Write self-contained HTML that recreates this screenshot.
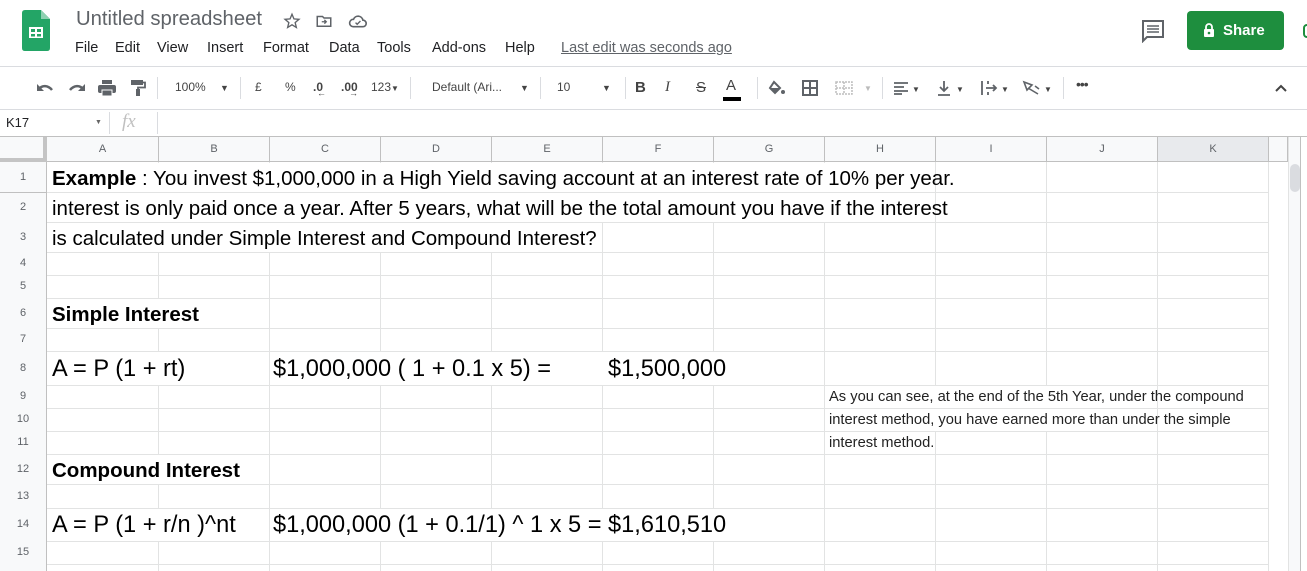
<!DOCTYPE html>
<html><head><meta charset="utf-8"><style>
*{margin:0;padding:0;box-sizing:border-box}
body{width:1307px;height:571px;overflow:hidden;background:#fff;font-family:"Liberation Sans",Arial,sans-serif;position:relative;color:#000}
.a{position:absolute}
.menu span{position:absolute;top:40px;font-size:14.5px;color:#202124}
.tb{position:absolute;top:80px;font-size:12px;color:#444}
.sep{position:absolute;top:77px;width:1px;height:22px;background:#dadce0}
.vl{position:absolute;top:162px;width:1px;height:409px;background:#e2e3e3}
.hl{position:absolute;left:47px;width:1221px;height:1px;background:#e2e3e3}
.rh{position:absolute;left:0;width:46px;text-align:center;font-size:11px;color:#5f6368}
.ch{position:absolute;top:137px;height:25px;line-height:25px;text-align:center;font-size:11px;color:#5f6368;border-right:1px solid #c0c0c0}
.t{position:absolute;background:#fff;white-space:nowrap;overflow:visible}
</style></head><body>
<svg class="a" style="left:22px;top:10px" width="28" height="41" viewBox="0 0 28 41"><path d="M3 0H19L28 9V38Q28 41 25 41H3Q0 41 0 38V3Q0 0 3 0Z" fill="#23a566"/><path d="M19 0V9H28Z" fill="#8ed1b1"/><rect x="7" y="17" width="14" height="11" fill="#fff"/><rect x="9" y="19" width="4" height="3" fill="#23a566"/><rect x="15" y="19" width="4" height="3" fill="#23a566"/><rect x="9" y="24" width="4" height="2.5" fill="#23a566"/><rect x="15" y="24" width="4" height="2.5" fill="#23a566"/></svg>
<div class="a" style="left:76px;top:8px;font-size:20.3px;color:#5f6368">Untitled spreadsheet</div>
<svg class="a" style="left:283px;top:12px" width="18" height="18" viewBox="0 0 24 24"><path d="M12 3l2.6 6.2 6.7.5-5.1 4.4 1.6 6.5L12 17.1 6.2 20.6l1.6-6.5L2.7 9.7l6.7-.5z" fill="none" stroke="#5f6368" stroke-width="1.8"/></svg>
<svg class="a" style="left:315px;top:12px" width="18" height="18" viewBox="0 0 24 24"><path d="M3 6h7l2 2h9v11H3z" fill="none" stroke="#5f6368" stroke-width="2"/><path d="M9 13h6M12.5 10.5l2.5 2.5-2.5 2.5" fill="none" stroke="#5f6368" stroke-width="1.8"/></svg>
<svg class="a" style="left:348px;top:12px" width="20" height="18" viewBox="0 0 24 22"><path d="M6 18h12a4 4 0 0 0 0-8 6 6 0 0 0-11.5-1A4.5 4.5 0 0 0 6 18z" fill="none" stroke="#5f6368" stroke-width="2"/><path d="M9 13l2 2 4-4" fill="none" stroke="#5f6368" stroke-width="1.6"/></svg>
<div class="menu"><span style="left:75px">File</span><span style="left:115px">Edit</span><span style="left:157px">View</span><span style="left:207px">Insert</span><span style="left:263px">Format</span><span style="left:329px">Data</span><span style="left:377px">Tools</span><span style="left:432px">Add-ons</span><span style="left:505px">Help</span><span style="left:561px;color:#5f6368;text-decoration:underline">Last edit was seconds ago</span></div>
<svg class="a" style="left:1141px;top:19px" width="24" height="24" viewBox="0 0 24 24"><path d="M2 2h20v16H6l-2 2-2 2z" fill="none" stroke="#5f6368" stroke-width="2"/><path d="M6 7h12M6 10h12M6 13h12" stroke="#5f6368" stroke-width="1.6"/></svg>
<div class="a" style="left:1187px;top:11px;width:97px;height:39px;background:#1e8e3e;border-radius:4px;color:#fff;font-weight:bold;font-size:15px;line-height:39px;padding-left:36px">Share</div>
<svg class="a" style="left:1203px;top:23px" width="12" height="14" viewBox="0 0 12 14"><path d="M3 6V4a3 3 0 0 1 6 0v2" fill="none" stroke="#fff" stroke-width="1.8"/><rect x="1" y="6" width="10" height="8" rx="1" fill="#fff"/><circle cx="6" cy="10" r="1.3" fill="#1e8e3e"/></svg>
<div class="a" style="left:1303px;top:24px;width:8px;height:14px;border:2px solid #1e8e3e;border-radius:7px"></div>
<div class="a" style="left:0;top:66px;width:1307px;height:1px;background:#dadce0"></div>
<svg class="a" style="left:35px;top:80px" width="20" height="16" viewBox="0 0 20 16"><path d="M4 9c3-4 9-4 13 1" fill="none" stroke="#5f6368" stroke-width="2.5"/><path d="M2 4v7h7z" fill="#5f6368"/></svg>
<svg class="a" style="left:67px;top:80px" width="20" height="16" viewBox="0 0 20 16"><path d="M16 9c-3-4-9-4-13 1" fill="none" stroke="#5f6368" stroke-width="2.5"/><path d="M18 4v7h-7z" fill="#5f6368"/></svg>
<svg class="a" style="left:97px;top:79px" width="20" height="18" viewBox="0 0 20 18"><rect x="5" y="1" width="10" height="4" fill="#5f6368"/><rect x="1" y="6" width="18" height="8" rx="2" fill="#5f6368"/><rect x="5" y="11" width="10" height="6" fill="#5f6368" stroke="#fff" stroke-width="1"/></svg>
<svg class="a" style="left:130px;top:79px" width="16" height="18" viewBox="0 0 16 18"><rect x="1" y="1" width="12" height="5" fill="#5f6368"/><path d="M13 3.5h2v5H8v3" fill="none" stroke="#5f6368" stroke-width="1.8"/><rect x="6" y="10" width="4" height="7" fill="#5f6368"/></svg>
<div class="sep" style="left:157px"></div>
<div class="tb" style="left:175px">100%</div><div class="tb" style="left:220px;font-size:9px;top:83px">▼</div>
<div class="sep" style="left:240px"></div>
<div class="tb" style="left:255px">£</div><div class="tb" style="left:285px">%</div>
<div class="tb" style="left:313px;font-weight:bold">.0<span style="position:absolute;left:4px;top:8px;font-size:9px">←</span></div>
<div class="tb" style="left:341px;font-weight:bold">.00<span style="position:absolute;left:8px;top:8px;font-size:9px">→</span></div>
<div class="tb" style="left:371px">123<span style="font-size:8px">▼</span></div>
<div class="sep" style="left:410px"></div>
<div class="tb" style="left:432px">Default (Ari...</div><div class="tb" style="left:520px;font-size:9px;top:83px">▼</div>
<div class="sep" style="left:540px"></div>
<div class="tb" style="left:557px">10</div><div class="tb" style="left:602px;font-size:9px;top:83px">▼</div>
<div class="sep" style="left:625px"></div>
<div class="tb" style="left:635px;font-size:15px;font-weight:bold;top:79px">B</div>
<div class="tb" style="left:665px;font-size:15px;font-style:italic;font-family:'Liberation Serif',serif;top:79px">I</div>
<div class="tb" style="left:696px;font-size:15px;top:79px;text-decoration:line-through">S</div>
<div class="tb" style="left:726px;font-size:15px;top:77px">A</div>
<div class="a" style="left:723px;top:97px;width:18px;height:4px;background:#000"></div>
<div class="sep" style="left:757px"></div>
<svg class="a" style="left:767px;top:80px" width="20" height="16" viewBox="0 0 20 16"><path d="M7 2l6 6-5 5-5-5z" fill="none" stroke="#5f6368" stroke-width="2"/><path d="M4 8h9l-5 5z" fill="#5f6368"/><circle cx="16" cy="12" r="2" fill="#5f6368"/></svg>
<svg class="a" style="left:802px;top:80px" width="16" height="16" viewBox="0 0 16 16"><path d="M1 1h14v14H1zM8 1v14M1 8h14" fill="none" stroke="#5f6368" stroke-width="2"/></svg>
<svg class="a" style="left:835px;top:81px" width="18" height="14" viewBox="0 0 18 14"><path d="M1 1h16v12H1z M9 1v12M1 7h16" fill="none" stroke="#bdbdbd" stroke-width="1.5" stroke-dasharray="2 1"/></svg>
<div class="tb" style="left:864px;font-size:8px;top:84px;color:#bbb">▼</div>
<div class="sep" style="left:882px"></div>
<svg class="a" style="left:893px;top:81px" width="16" height="14" viewBox="0 0 16 14"><path d="M1 2h14M1 6h10M1 10h14M1 13h8" stroke="#5f6368" stroke-width="1.8"/></svg><div class="tb" style="left:912px;font-size:8px;top:85px">▼</div>
<svg class="a" style="left:936px;top:80px" width="16" height="16" viewBox="0 0 16 16"><path d="M8 1v10M4 7l4 4 4-4M2 15h12" fill="none" stroke="#5f6368" stroke-width="1.8"/></svg><div class="tb" style="left:956px;font-size:8px;top:85px">▼</div>
<svg class="a" style="left:980px;top:80px" width="18" height="16" viewBox="0 0 18 16"><path d="M2 1v14M8 1v3M8 12v3M6 8h10M13 5l3 3-3 3" fill="none" stroke="#5f6368" stroke-width="1.8"/></svg><div class="tb" style="left:1001px;font-size:8px;top:85px">▼</div>
<svg class="a" style="left:1022px;top:80px" width="20" height="16" viewBox="0 0 20 16"><path d="M2 2l8 3-5 5zM6 8l10 6M13 6l4 3" fill="none" stroke="#5f6368" stroke-width="1.6"/></svg><div class="tb" style="left:1044px;font-size:8px;top:85px">▼</div>
<div class="sep" style="left:1063px"></div>
<div class="tb" style="left:1076px;font-size:14px;top:76px;letter-spacing:-1px">•••</div>
<svg class="a" style="left:1275px;top:84px" width="12" height="8" viewBox="0 0 12 8"><path d="M1 7l5-5 5 5" fill="none" stroke="#444" stroke-width="2"/></svg>
<div class="a" style="left:0;top:109px;width:1307px;height:1px;background:#dadce0"></div>
<div class="a" style="left:6px;top:115px;font-size:13px;color:#202124">K17</div>
<div class="a" style="left:95px;top:119px;font-size:7px;color:#666">▼</div>
<div class="a" style="left:109px;top:112px;width:1px;height:22px;background:#dadce0"></div>
<div class="a" style="left:122px;top:111px;font-size:19px;font-style:italic;font-family:'Liberation Serif',serif;color:#c0c0c0">fx</div>
<div class="a" style="left:157px;top:112px;width:1px;height:22px;background:#dadce0"></div>
<div class="a" style="left:0;top:136px;width:1307px;height:1px;background:#c0c0c0"></div>
<div class="a" style="left:0;top:137px;width:1301px;height:25px;background:#f8f9fa"></div>
<div class="a" style="left:0;top:137px;width:47px;height:25px;border-right:4px solid #c4c4c4;border-bottom:4px solid #c4c4c4"></div>
<div class="ch" style="left:47px;width:112px">A</div><div class="ch" style="left:159px;width:111px">B</div><div class="ch" style="left:270px;width:111px">C</div><div class="ch" style="left:381px;width:111px">D</div><div class="ch" style="left:492px;width:111px">E</div><div class="ch" style="left:603px;width:111px">F</div><div class="ch" style="left:714px;width:111px">G</div><div class="ch" style="left:825px;width:111px">H</div><div class="ch" style="left:936px;width:111px">I</div><div class="ch" style="left:1047px;width:111px">J</div><div class="ch" style="left:1158px;width:111px;background:#e8eaed">K</div><div class="ch" style="left:1269px;width:19px"></div>
<div class="a" style="left:47px;top:161px;width:1241px;height:1px;background:#c0c0c0"></div>
<div class="a" style="left:0;top:162px;width:47px;height:409px;background:#f8f9fa;border-right:1px solid #c0c0c0"></div>
<div class="a" style="left:1288px;top:137px;width:13px;height:434px;background:#f8f9fa;border-left:1px solid #e2e3e3;border-right:1px solid #c0c0c0"></div>
<div class="a" style="left:1290px;top:164px;width:10px;height:28px;background:#dadce0;border-radius:5px"></div>
<div class="vl" style="left:158px"></div><div class="vl" style="left:269px"></div><div class="vl" style="left:380px"></div><div class="vl" style="left:491px"></div><div class="vl" style="left:602px"></div><div class="vl" style="left:713px"></div><div class="vl" style="left:824px"></div><div class="vl" style="left:935px"></div><div class="vl" style="left:1046px"></div><div class="vl" style="left:1157px"></div><div class="vl" style="left:1268px"></div>
<div class="hl" style="top:192px"></div><div class="hl" style="top:222px"></div><div class="hl" style="top:252px"></div><div class="hl" style="top:275px"></div><div class="hl" style="top:298px"></div><div class="hl" style="top:328px"></div><div class="hl" style="top:351px"></div><div class="hl" style="top:385px"></div><div class="hl" style="top:408px"></div><div class="hl" style="top:431px"></div><div class="hl" style="top:454px"></div><div class="hl" style="top:484px"></div><div class="hl" style="top:508px"></div><div class="hl" style="top:541px"></div><div class="hl" style="top:564px"></div>
<div class="a" style="left:0;top:192px;width:47px;height:1px;background:#c0c0c0"></div>
<div class="rh" style="top:162px;line-height:30px">1</div><div class="rh" style="top:192px;line-height:30px">2</div><div class="rh" style="top:222px;line-height:30px">3</div><div class="rh" style="top:252px;line-height:23px">4</div><div class="rh" style="top:275px;line-height:23px">5</div><div class="rh" style="top:298px;line-height:30px">6</div><div class="rh" style="top:328px;line-height:23px">7</div><div class="rh" style="top:351px;line-height:34px">8</div><div class="rh" style="top:385px;line-height:23px">9</div><div class="rh" style="top:408px;line-height:23px">10</div><div class="rh" style="top:431px;line-height:23px">11</div><div class="rh" style="top:454px;line-height:30px">12</div><div class="rh" style="top:484px;line-height:24px">13</div><div class="rh" style="top:508px;line-height:33px">14</div><div class="rh" style="top:541px;line-height:23px">15</div>
<div class="t" style="left:48px;top:163px;width:887px;height:29px;line-height:31px;font-size:20.5px;padding-left:4px"><b>Example</b> : You invest $1,000,000 in a High Yield saving account at an interest rate of 10% per year.</div>
<div class="t" style="left:48px;top:193px;width:887px;height:29px;line-height:31px;font-size:20.5px;padding-left:4px">interest is only paid once a year. After 5 years, what will be the total amount you have if the interest</div>
<div class="t" style="left:48px;top:223px;width:554px;height:29px;line-height:31px;font-size:20.5px;padding-left:4px">is calculated under Simple Interest and Compound Interest?</div>
<div class="t" style="left:48px;top:299px;width:165px;height:29px;line-height:31px;font-size:20.5px;padding-left:4px;font-weight:bold">Simple Interest</div>
<div class="t" style="left:48px;top:352px;width:221px;height:33px;line-height:34px;font-size:23.6px;padding-left:4px">A = P (1 + rt)</div>
<div class="t" style="left:270px;top:352px;width:465px;height:33px;line-height:34px;font-size:23.6px;padding-left:3px">$1,000,000 ( 1 + 0.1 x 5) =<span style="position:absolute;left:338px">$1,500,000</span></div>
<div class="t" style="left:825px;top:386px;width:332px;height:22px;line-height:23px;font-size:14.7px;padding-left:4px;color:#222">As you can see, at the end of the 5th Year, under the compound</div>
<div class="t" style="left:825px;top:409px;width:332px;height:22px;line-height:23px;font-size:14.7px;padding-left:4px;color:#222">interest method, you have earned more than under the simple</div>
<div class="t" style="left:825px;top:432px;width:110px;height:22px;line-height:23px;font-size:14.7px;padding-left:4px;color:#222">interest method.</div>
<div class="t" style="left:48px;top:455px;width:200px;height:29px;line-height:31px;font-size:20.5px;padding-left:4px;font-weight:bold">Compound Interest</div>
<div class="t" style="left:48px;top:509px;width:221px;height:32px;line-height:33px;font-size:23.6px;padding-left:4px">A = P (1 + r/n )^nt</div>
<div class="t" style="left:270px;top:509px;width:465px;height:32px;line-height:33px;font-size:23.6px;padding-left:3px">$1,000,000 (1 + 0.1/1) ^ 1 x 5 = $1,610,510</div>
</body></html>
